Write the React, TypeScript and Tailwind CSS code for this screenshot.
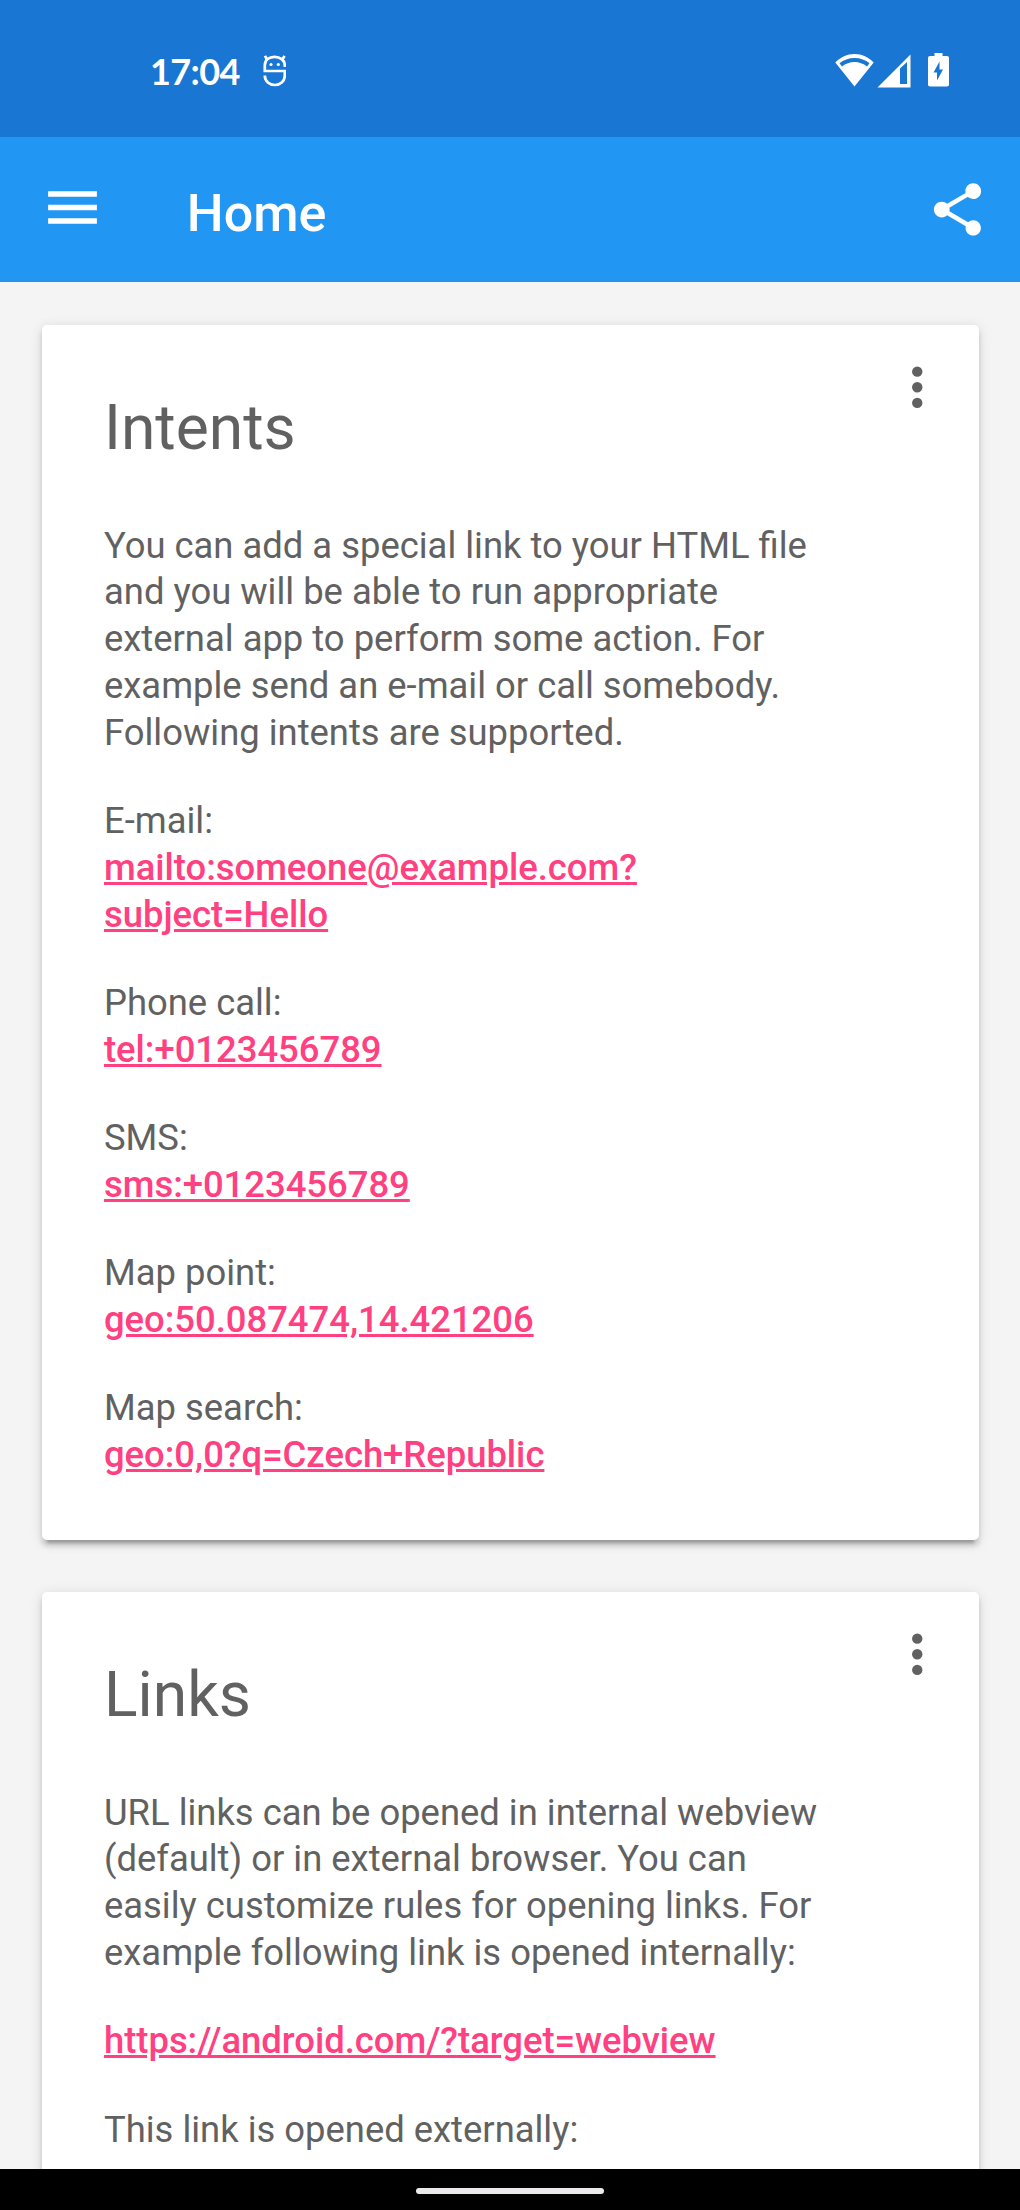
import React from "react";

const MenuIcon = () => (
  <svg viewBox="0 0 24 24" className="size-[65px] fill-white">
    <path d="M3 18h18v-2H3v2zm0-5h18v-2H3v2zm0-7v2h18V6H3z" />
  </svg>
);

const ShareIcon = () => (
  <svg viewBox="0 0 24 24" className="size-[63px] fill-white">
    <path d="M18 16.08c-.76 0-1.44.3-1.96.77L8.91 12.7c.05-.23.09-.46.09-.7s-.04-.47-.09-.7l7.05-4.11c.54.5 1.25.81 2.04.81 1.66 0 3-1.34 3-3s-1.34-3-3-3-3 1.34-3 3c0 .24.04.47.09.7L8.04 9.81C7.5 9.31 6.79 9 6 9c-1.66 0-3 1.34-3 3s1.34 3 3 3c.79 0 1.5-.31 2.04-.81l7.12 4.16c-.05.21-.08.43-.08.65 0 1.61 1.31 2.92 2.92 2.92 1.61 0 2.92-1.31 2.92-2.92s-1.31-2.92-2.92-2.92z" />
  </svg>
);

const MoreIcon = () => (
  <svg viewBox="0 0 24 24" className="size-[62.5px] fill-[#616161]">
    <circle cx="12" cy="6" r="2" />
    <circle cx="12" cy="12" r="2" />
    <circle cx="12" cy="18" r="2" />
  </svg>
);

const DebugIcon = () => (
  <svg viewBox="0 0 26 36" className="h-[36px] w-[26px]" fill="none" stroke="white" strokeWidth="2.7">
    <path d="M24.8 14V12.500C24.800 7 20 3.800 14.500 3.800S4.800 7 4.800 12.500V18H24.800V22.500C24.800 28.500 20 32 14.800 32S4.800 28.500 4.800 22.500" />
    <path d="M7 6.500 5 2.800M22.500 6.500 24.500 2.800" />
    <circle cx="11" cy="11.500" r="1.600" fill="white" stroke="none" />
    <circle cx="18.300" cy="11.500" r="1.600" fill="white" stroke="none" />
  </svg>
);

const WifiIcon = () => (
  <svg viewBox="0 0 39 34" className="h-[34px] w-[39px]">
    <path fill="white" fillRule="evenodd" d="M19.500 33.500.3 9.500C5.500 4.200 12 1 19.500 1S33.500 4.200 38.700 9.500ZM4.500 10.200 7 13.500C10.500 10.500 15 9 19.500 9S28.500 10.500 32 13.500L34.500 10.200C30.500 7 25.500 5 19.500 5S8.500 7 4.500 10.200Z" />
  </svg>
);

const SignalIcon = () => (
  <svg viewBox="0 0 34 34" className="h-[34px] w-[34px]">
    <path fill="white" fillRule="evenodd" d="M.5 33.500 33.500.5V33.500ZM23 14.500V30H30V8Z" />
  </svg>
);

const BatteryIcon = () => (
  <svg viewBox="0 0 21 34" className="h-[34px] w-[21px]">
    <path fill="white" fillRule="evenodd" d="M6.500 0H14.500V3H19C20.200 3 21 3.800 21 5V31.500C21 32.700 20.200 33.500 19 33.500H2C.8 33.500 0 32.700 0 31.500V5C0 3.800.8 3 2 3H6.500ZM11.500 8.500 5.500 19.500H9V27.500L15 16.500H11.500Z" />
  </svg>
);

const P = ({ children }: { children: React.ReactNode }) => (
  <p className="mb-[41.56px] text-[36.4px] leading-[46.78px] whitespace-nowrap last:mb-0">{children}</p>
);

const A = ({ children }: { children: React.ReactNode }) => (
  <a className="font-medium text-[#ff4081] underline">{children}</a>
);

const Card = ({ title, children }: { title: string; children: React.ReactNode }) => (
  <section className="relative w-[937.5px] shrink-0 rounded-[5px] bg-white px-[62.4px] pt-[63px] pb-[61.1px] shadow-[0_5.2px_5.2px_0_rgba(0,0,0,0.14),0_7.8px_2.6px_-5.2px_rgba(0,0,0,0.2),0_2.6px_13px_0_rgba(0,0,0,0.12)]">
    <button aria-label="More" className="absolute top-[31px] right-[31px]">
      <MoreIcon />
    </button>
    <h2 className="mb-[54.6px] text-[62.33px] leading-[80px]">{title}</h2>
    {children}
  </section>
);

export default function App() {
  return (
    <div className="flex h-[2210px] w-[1020px] flex-col overflow-hidden bg-[#f4f4f4] font-['Roboto',sans-serif] text-[#616161]">
      <div className="flex h-[137px] shrink-0 items-start bg-[#1976d2] pt-[53px] pr-[71px] pl-[150px]">
        <span className="w-[110px] font-['Lato',sans-serif] text-[36px] leading-[37px] font-bold tracking-[-0.6px] text-white">17:04</span>
        <DebugIcon />
        <div className="ml-auto flex items-start">
          <WifiIcon />
          <div className="mr-[17px] ml-[3px] pt-px">
            <SignalIcon />
          </div>
          <BatteryIcon />
        </div>
      </div>
      <header className="flex h-[144.5px] shrink-0 items-start bg-[#2196f3] pr-[31px] pl-[40.300px] text-white">
        <button aria-label="Menu" className="mt-[38px]">
          <MenuIcon />
        </button>
        <h1 className="mt-[46px] ml-[81.5px] text-[52px] leading-[61px] font-medium">Home</h1>
        <button aria-label="Share" className="mt-[41px] ml-auto">
          <ShareIcon />
        </button>
      </header>
      <main className="flex min-h-0 flex-1 flex-col gap-[52px] overflow-hidden pt-[43.5px] pl-[41.6px]">
        <Card title="Intents">
          <P>
            You can add a special link to your HTML file<br />
            and you will be able to run appropriate<br />
            external app to perform some action. For<br />
            example send an e-mail or call somebody.<br />
            Following intents are supported.
          </P>
          <P>
            E-mail:<br />
            <A>mailto:someone@example.com?<br />subject=Hello</A>
          </P>
          <P>
            Phone call:<br />
            <A>tel:+0123456789</A>
          </P>
          <P>
            SMS:<br />
            <A>sms:+0123456789</A>
          </P>
          <P>
            Map point:<br />
            <A>geo:50.087474,14.421206</A>
          </P>
          <P>
            Map search:<br />
            <A>geo:0,0?q=Czech+Republic</A>
          </P>
        </Card>
        <Card title="Links">
          <P>
            URL links can be opened in internal webview<br />
            (default) or in external browser. You can<br />
            easily customize rules for opening links. For<br />
            example following link is opened internally:
          </P>
          <P>
            <A>https://android.com/?target=webview</A>
          </P>
          <P>This link is opened externally:</P>
        </Card>
      </main>
      <footer className="flex h-[41.5px] shrink-0 justify-center bg-black pt-[19px]">
        <div className="h-[6.5px] w-[188px] rounded-full bg-[#ece9ec]" />
      </footer>
    </div>
  );
}
